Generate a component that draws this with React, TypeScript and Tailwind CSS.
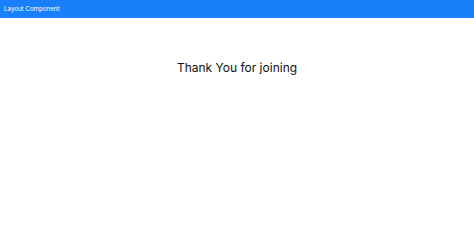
export default function App() {
  return (
    <div className="min-h-[204px] bg-white font-['Inter',sans-serif]">
      <header className="flex h-[18px] items-center bg-[#1a7ffb] px-[4px]">
        <span className="text-[6.2px] text-white">Layout Component</span>
      </header>
      <main className="pt-[40px] text-center">
        <h1 className="text-[12px] leading-[20px] text-[#111111]">Thank You for joining</h1>
      </main>
    </div>
  );
}
